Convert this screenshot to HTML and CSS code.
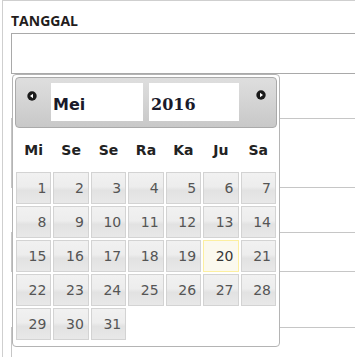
FILE: index.html
```html
<!DOCTYPE html>
<html>
<head>
<meta charset="utf-8">
<link rel="stylesheet" href="styles.css">
</head>
<body>
<div class="panel">
  <label class="lbl">TANGGAL</label>
  <input class="inp" type="text">
  <div class="field f2"></div>
  <div class="field f3"></div>
  <div class="field f4"></div>
</div>

<div class="dp">
  <div class="dp-head">
    <div class="nav prev">
      <svg class="ico" viewBox="0 0 10 10" width="10" height="10"><circle cx="5" cy="5" r="4.7" fill="#1a1a1a"/><polygon points="3,5 6,2.8 6,7.2" fill="#fff"/></svg>
    </div>
    <select class="sel month"><option>Mei</option></select>
    <select class="sel year"><option>2016</option></select>
    <div class="nav next">
      <svg class="ico" viewBox="0 0 10 10" width="10" height="10"><circle cx="5" cy="5" r="4.7" fill="#1a1a1a"/><polygon points="7,5 4,2.8 4,7.2" fill="#fff"/></svg>
    </div>
  </div>
  <table class="cal">
    <thead>
      <tr><th>Mi</th><th>Se</th><th>Se</th><th>Ra</th><th>Ka</th><th>Ju</th><th>Sa</th></tr>
    </thead>
    <tbody>
      <tr><td><a class="d">1</a></td><td><a class="d">2</a></td><td><a class="d">3</a></td><td><a class="d">4</a></td><td><a class="d">5</a></td><td><a class="d">6</a></td><td><a class="d">7</a></td></tr>
      <tr><td><a class="d">8</a></td><td><a class="d">9</a></td><td><a class="d">10</a></td><td><a class="d">11</a></td><td><a class="d">12</a></td><td><a class="d">13</a></td><td><a class="d">14</a></td></tr>
      <tr><td><a class="d">15</a></td><td><a class="d">16</a></td><td><a class="d">17</a></td><td><a class="d">18</a></td><td><a class="d">19</a></td><td><a class="d today">20</a></td><td><a class="d">21</a></td></tr>
      <tr><td><a class="d">22</a></td><td><a class="d">23</a></td><td><a class="d">24</a></td><td><a class="d">25</a></td><td><a class="d">26</a></td><td><a class="d">27</a></td><td><a class="d">28</a></td></tr>
      <tr><td><a class="d">29</a></td><td><a class="d">30</a></td><td><a class="d">31</a></td><td></td><td></td><td></td><td></td></tr>
    </tbody>
  </table>
</div>
</body>
</html>
```
FILE: styles.css
```css
html, body {
  margin: 0;
  padding: 0;
  background: #fff;
  overflow: hidden;
}
body {
  width: 355px;
  height: 357px;
  position: relative;
}
.panel {
  box-sizing: border-box;
  margin-left: 2px;
  border-left: 1px solid #cfcfcf;
  border-top: 1px solid #cfcfcf;
  padding-left: 8px;
  height: 357px;
}
.lbl {
  display: block;
  margin-top: 11px;
  font-family: "Open Sans", sans-serif;
  font-weight: bold;
  font-size: 14px;
  line-height: 18px;
  color: #231c1c;
}
.inp {
  display: block;
  box-sizing: border-box;
  margin: 3px 0 0 0;
  padding: 0;
  width: 344px;
  height: 41px;
  border: 1px solid #a9a9a9;
  border-right: 0;
  background: #fff;
}
.field {
  box-sizing: border-box;
  width: 344px;
  border: 1px solid #c6c6c6;
  border-right: 0;
}
.f2 { margin-top: 44px; height: 70px; }
.f3 { margin-top: 44px; height: 40px; }
.f4 { margin-top: 55px; height: 30px; border-bottom: 0; }

.dp {
  position: absolute;
  top: 74px;
  left: 12px;
  width: 268px;
  box-sizing: border-box;
  border: 1px solid #b4b4b4;
  border-radius: 4px;
  padding: 2px;
  background: #fff;
  z-index: 2;
}
.dp-head {
  display: flex;
  box-sizing: border-box;
  height: 51px;
  border: 1px solid #aaa;
  border-radius: 4px;
  background: linear-gradient(#dedede 0%, #d5d5d5 45%, #c8c8c8 100%);
}
.nav { flex: none; }
.prev { width: 35px; }
.next { width: 37px; }
.ico { display: block; }
.prev .ico { margin: 13px 0 0 11px; }
.next .ico { margin: 12px 0 0 17px; }
.sel {
  -webkit-appearance: none;
  appearance: none;
  flex: none;
  box-sizing: border-box;
  height: 38px;
  margin: 5px 0 0 0;
  padding: 4px 0 0 2px;
  border: 0;
  border-radius: 0;
  background: #fff;
  font-family: "DejaVu Sans", sans-serif;
  font-weight: bold;
  font-size: 16px;
  color: #1a1a2a;
  outline: none;
}
.month { width: 92px; margin-right: 6px; }
.year { width: 90px; font-family: "DejaVu Serif", serif; }

.cal {
  width: 100%;
  table-layout: fixed;
  border-collapse: collapse;
  margin: 0 0 3px 0;
}
.cal th {
  height: 43px;
  padding: 0;
  font-family: "DejaVu Sans", sans-serif;
  font-weight: bold;
  font-size: 14px;
  color: #222;
  text-align: center;
  vertical-align: middle;
}
.cal td {
  padding: 1px;
  height: 32px;
}
.d {
  display: block;
  box-sizing: border-box;
  height: 32px;
  border: 1px solid #d3d3d3;
  padding-right: 4px;
  line-height: 30px;
  text-align: right;
  font-family: "DejaVu Sans", sans-serif;
  font-size: 14px;
  color: #555;
  text-decoration: none;
  background: linear-gradient(#f1f1f1 0%, #ededed 45%, #e2e2e2 58%, #e8e8e8 100%);
}
.d.today {
  border-color: #fcefa1;
  background: #fbf9ee;
  color: #363636;
}
```
